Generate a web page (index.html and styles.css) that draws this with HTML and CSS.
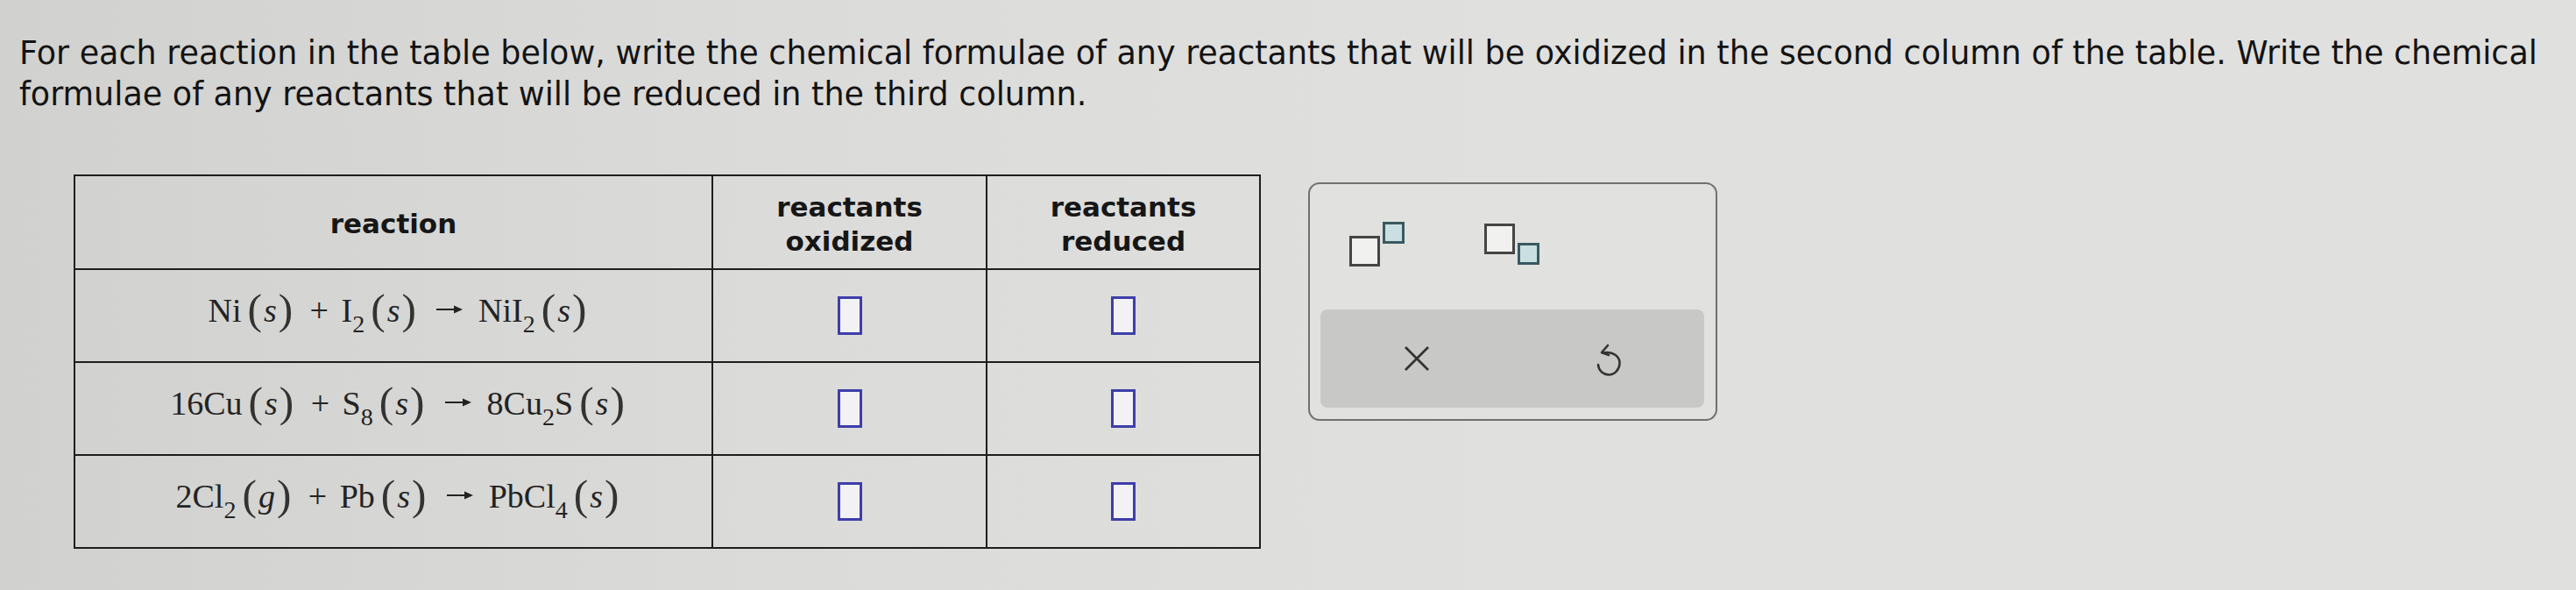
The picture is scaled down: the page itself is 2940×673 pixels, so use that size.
FILE: index.html
```html
<!DOCTYPE html>
<html lang="en">
<head>
<meta charset="utf-8">
<title>Oxidation and reduction</title>
<link rel="stylesheet" href="styles.css">
</head>
<body>
<main class="page">
  <p class="prompt">For each reaction in the table below, write the chemical formulae of any reactants that will be oxidized in the second column of the table. Write the chemical formulae of any reactants that will be reduced in the third column.</p>
  <div class="work">
    <table class="rx">
      <colgroup><col class="w1"><col class="w2"><col class="w3"></colgroup>
      <thead>
        <tr><th>reaction</th><th>reactants<br>oxidized</th><th>reactants<br>reduced</th></tr>
      </thead>
      <tbody>
        <tr>
          <td class="eqc"><span class="eq">Ni<span class="ph"><span class="pr">(</span><i>s</i><span class="pr">)</span></span><span class="op">+</span>I<sub>2</sub><span class="ph"><span class="pr">(</span><i>s</i><span class="pr">)</span></span><svg class="arr" viewBox="0 0 32 12"><path d="M1 6H23" stroke="#222" stroke-width="2"/><path d="M21 1.5L31 6L21 10.5Z" fill="#222"/></svg>NiI<sub>2</sub><span class="ph"><span class="pr">(</span><i>s</i><span class="pr">)</span></span></span></td>
          <td><span class="ans"></span></td>
          <td><span class="ans"></span></td>
        </tr>
        <tr>
          <td class="eqc"><span class="eq">16Cu<span class="ph"><span class="pr">(</span><i>s</i><span class="pr">)</span></span><span class="op">+</span>S<sub>8</sub><span class="ph"><span class="pr">(</span><i>s</i><span class="pr">)</span></span><svg class="arr" viewBox="0 0 32 12"><path d="M1 6H23" stroke="#222" stroke-width="2"/><path d="M21 1.5L31 6L21 10.5Z" fill="#222"/></svg>8Cu<sub>2</sub>S<span class="ph"><span class="pr">(</span><i>s</i><span class="pr">)</span></span></span></td>
          <td><span class="ans"></span></td>
          <td><span class="ans"></span></td>
        </tr>
        <tr>
          <td class="eqc"><span class="eq">2Cl<sub>2</sub><span class="ph"><span class="pr">(</span><i>g</i><span class="pr">)</span></span><span class="op">+</span>Pb<span class="ph"><span class="pr">(</span><i>s</i><span class="pr">)</span></span><svg class="arr" viewBox="0 0 32 12"><path d="M1 6H23" stroke="#222" stroke-width="2"/><path d="M21 1.5L31 6L21 10.5Z" fill="#222"/></svg>PbCl<sub>4</sub><span class="ph"><span class="pr">(</span><i>s</i><span class="pr">)</span></span></span></td>
          <td><span class="ans"></span></td>
          <td><span class="ans"></span></td>
        </tr>
      </tbody>
    </table>
    <div class="pad">
      <div class="keys">
        <button class="key" type="button" aria-label="superscript">
          <svg width="64" height="52" viewBox="0 0 64 52"><rect x="1.5" y="17.5" width="32" height="32" fill="#f1f1f0" stroke="#454545" stroke-width="3"/><rect x="39.5" y="1.5" width="22" height="22" fill="#c9dfe2" stroke="#385a60" stroke-width="3"/></svg>
        </button>
        <button class="key" type="button" aria-label="subscript">
          <svg width="64" height="48" viewBox="0 0 64 48"><rect x="1.5" y="1.5" width="32" height="32" fill="#f1f1f0" stroke="#454545" stroke-width="3"/><rect x="39.5" y="23.5" width="22" height="22" fill="#c9dfe2" stroke="#385a60" stroke-width="3"/></svg>
        </button>
        <span class="key"></span>
      </div>
      <div class="actions">
        <button class="act" type="button" aria-label="clear">
          <svg width="30" height="30" viewBox="0 0 30 30"><path d="M2 2L28 28M28 2L2 28" stroke="#333" stroke-width="2.8" fill="none"/></svg>
        </button>
        <button class="act" type="button" aria-label="undo">
          <svg width="34" height="42" viewBox="0 0 34 42"><path d="M16 6L9 14L17 17" stroke="#333" stroke-width="2.6" fill="none" stroke-linejoin="round" stroke-linecap="round"/><path d="M10 14.5C22 12 30 19 29.5 27C29 34 23.5 39.5 17 39.5C10.5 39.5 5.5 34.5 5 28" stroke="#333" stroke-width="2.6" fill="none" stroke-linecap="round"/></svg>
        </button>
      </div>
    </div>
  </div>
</main>
</body>
</html>
```

FILE: styles.css
```css
html, body {
  margin: 0;
  padding: 0;
}

body {
  width: 2940px;
  height: 673px;
  overflow: hidden;
  background: linear-gradient(90deg, #d1d1cf 0%, #dbdbda 30%, #e0e0de 60%, #e0e0de 100%);
  color: #151515;
}

.page {
  padding: 37px 0 0 22px;
}

.prompt {
  margin: 0;
  width: 2905px;
  font-family: "DejaVu Sans", Verdana, sans-serif;
  font-size: 36.5px;
  line-height: 47px;
  color: #131313;
}

.work {
  display: flex;
  align-items: flex-start;
  gap: 54px;
  margin: 68px 0 0 62px;
}

.rx {
  border-collapse: collapse;
  width: 1353px;
  table-layout: fixed;
}

.w1 { width: 728px; }
.w2 { width: 313px; }
.w3 { width: 312px; }

.rx th,
.rx td {
  border: 2px solid #1e1e1e;
  text-align: center;
  vertical-align: middle;
  padding: 0;
}

.rx thead tr { height: 107px; }
.rx tbody tr { height: 106px; }

.rx th {
  font-family: "DejaVu Sans", Verdana, sans-serif;
  font-weight: bold;
  font-size: 31px;
  line-height: 39px;
  padding-top: 4px;
  color: #161616;
}

.rx td.eqc {
  padding: 0 0 14px 14px;
}

.eq {
  font-family: "Liberation Serif", "Times New Roman", serif;
  font-size: 38px;
  color: #232323;
  white-space: nowrap;
}

.ph {
  margin: 0 5px 0 7px;
}

.eq i {
  font-style: italic;
  margin: 0 2px;
}

.pr {
  font-size: 1.3em;
  color: #333;
  vertical-align: -0.05em;
}

.eq sub {
  font-size: 0.74em;
  line-height: 0;
  vertical-align: -0.42em;
}

.op {
  margin: 0 0.38em;
}

.arr {
  width: 32px;
  height: 12px;
  margin: 0 0.45em;
  vertical-align: 0.2em;
}

.ans {
  display: inline-block;
  width: 22px;
  height: 38px;
  border: 3px solid #3e3eaa;
  background: #f2f2f5;
  vertical-align: middle;
}

.pad {
  box-sizing: border-box;
  width: 467px;
  height: 272px;
  margin-top: 9px;
  border: 2px solid #707070;
  border-radius: 13px;
  background: #e1e1df;
  display: flex;
  flex-direction: column;
}

.keys {
  height: 143px;
  box-sizing: border-box;
  padding-bottom: 6px;
  display: grid;
  grid-template-columns: repeat(3, 1fr);
  align-items: center;
  justify-items: center;
}

.key {
  border: 0;
  background: none;
  padding: 0;
  display: flex;
}

.actions {
  height: 112px;
  margin: 0 13px 13px 12px;
  border-radius: 8px;
  background: #c8c8c7;
  display: grid;
  grid-template-columns: 1fr 1fr;
  align-items: center;
  justify-items: center;
}

.act {
  border: 0;
  background: none;
  padding: 0;
  display: flex;
}
```
